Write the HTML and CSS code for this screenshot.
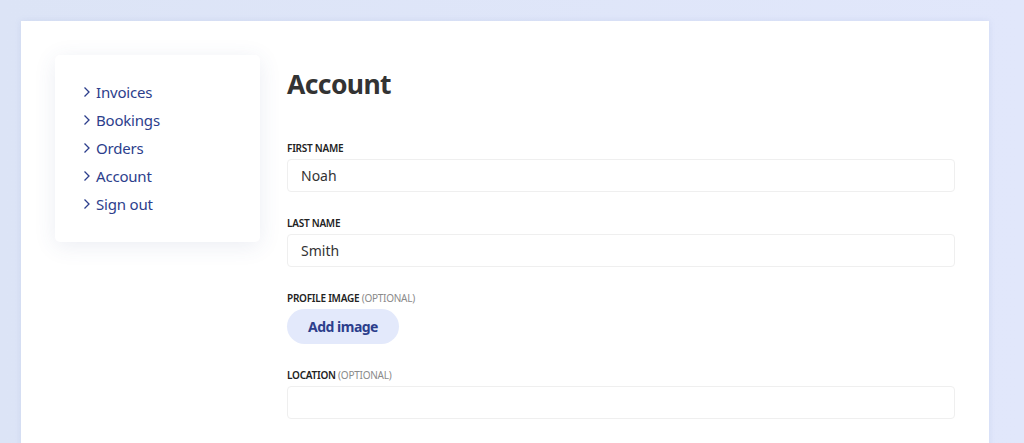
FILE: index.html
```html
<!DOCTYPE html>
<html>
<head>
<meta charset="utf-8">
<link rel="stylesheet" href="styles.css">
</head>
<body>
<div class="page">
  <div class="card">
    <nav class="sidebar">
      <a class="nav-item" href="#"><svg class="chev" viewBox="0 0 8 12"><path d="M1.5 1.5 L6 6 L1.5 10.5"/></svg>Invoices</a>
      <a class="nav-item" href="#"><svg class="chev" viewBox="0 0 8 12"><path d="M1.5 1.5 L6 6 L1.5 10.5"/></svg>Bookings</a>
      <a class="nav-item" href="#"><svg class="chev" viewBox="0 0 8 12"><path d="M1.5 1.5 L6 6 L1.5 10.5"/></svg>Orders</a>
      <a class="nav-item" href="#"><svg class="chev" viewBox="0 0 8 12"><path d="M1.5 1.5 L6 6 L1.5 10.5"/></svg>Account</a>
      <a class="nav-item" href="#"><svg class="chev" viewBox="0 0 8 12"><path d="M1.5 1.5 L6 6 L1.5 10.5"/></svg>Sign out</a>
    </nav>
    <main class="main">
      <h1 class="title">Account</h1>
      <div class="field">
        <label class="label">First name</label>
        <div class="input">Noah</div>
      </div>
      <div class="field">
        <label class="label">Last name</label>
        <div class="input">Smith</div>
      </div>
      <div class="field">
        <label class="label">Profile image <span class="opt">(optional)</span></label>
        <button class="btn">Add image</button>
      </div>
      <div class="field">
        <label class="label">Location <span class="opt">(optional)</span></label>
        <div class="input"></div>
      </div>
    </main>
  </div>
</div>
</body>
</html>
```
FILE: styles.css
```css
html, body {
  margin: 0;
  height: 100%;
}
body {
  background: linear-gradient(90deg, #dce4f6 0%, #e1e7fb 100%);
  font-family: "Noto Sans", "Open Sans", sans-serif;
  overflow: hidden;
}
.page {
  padding: 21px 35px 0 21px;
}
.card {
  background: #fff;
  padding: 34px;
  display: flex;
  gap: 27px;
  min-height: 500px;
  box-shadow: 0 0 6px rgba(120, 140, 200, 0.15);
}
.sidebar {
  width: 205px;
  flex: none;
  align-self: flex-start;
  box-sizing: border-box;
  padding: 23px 28px 24px;
  border-radius: 5px;
  background: #fff;
  box-shadow: 0 4px 22px rgba(60, 80, 140, 0.10);
  display: flex;
  flex-direction: column;
}
.nav-item {
  display: flex;
  align-items: center;
  height: 28px;
  color: #2c3e8c;
  text-decoration: none;
  font-size: 15px;
  letter-spacing: -0.2px;
}
.chev {
  width: 8px;
  height: 12px;
  margin-right: 5px;
  fill: none;
  stroke: #2c3e8c;
  stroke-width: 1.3;
}
.main {
  flex: 1;
}
.title {
  margin: 12px 0 41px;
  font-size: 26.5px;
  font-weight: 700;
  color: #333;
  line-height: 34px;
  letter-spacing: -0.6px;
}
.field {
  margin-bottom: 25px;
}
.label {
  display: block;
  font-size: 10px;
  font-weight: 600;
  color: #222;
  text-transform: uppercase;
  line-height: 12px;
  margin-bottom: 5px;
  letter-spacing: -0.25px;
}
.opt {
  font-weight: 400;
  color: #8a8a8a;
}
.input {
  height: 33px;
  box-sizing: border-box;
  border: 1px solid #efefef;
  border-radius: 4px;
  padding: 0 13px;
  font-size: 14px;
  color: #333;
  line-height: 31px;
}
.btn {
  width: 112px;
  height: 35px;
  border: none;
  border-radius: 18px;
  background: #e3e9fb;
  color: #2c3e8c;
  font-family: inherit;
  font-size: 14px;
  font-weight: 700;
  letter-spacing: -0.5px;
  padding: 0;
}
```
